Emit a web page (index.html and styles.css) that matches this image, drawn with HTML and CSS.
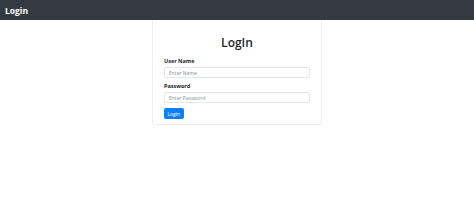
FILE: index.html
```html
<!DOCTYPE html>
<html lang="en">
<head>
  <meta charset="UTF-8" />
  <meta name="viewport" content="width=device-width, initial-scale=1.0" />
  <title>Login</title>
  <link rel="stylesheet" href="styles.css">
</head>
<body>
  <nav class="navbar">
    <span class="brand">Login</span>
  </nav>
  <div class="page">
    <form class="card">
      <h2>LogIn</h2>
      <div class="field">
        <label for="name">User Name</label>
        <input type="text" id="name" placeholder="Enter Name" />
      </div>
      <div class="field">
        <label for="pass">Password</label>
        <input type="password" id="pass" placeholder="Enter Password" />
      </div>
      <button type="button" class="btn">Login</button>
    </form>
  </div>
</body>
</html>
```

FILE: styles.css
```css
body {
  margin: 0;
  font-family: "Open Sans", "Noto Sans", Arial, sans-serif;
  background-color: #fff;
  color: #212529;
}
.navbar {
  height: 20px;
  background-color: #343a40;
  display: flex;
  align-items: center;
  padding: 0 5px;
}
.brand {
  color: #fff;
  font-size: 8.5px;
  font-weight: 700;
}
.page {
  display: flex;
  justify-content: center;
}
.card {
  box-sizing: border-box;
  width: 170px;
  padding: 16px 11px 5px 11px;
  border: 1px solid #eceef0;
  border-top: none;
  border-radius: 0 0 3px 3px;
}
.card h2 {
  margin: 0 0 8px;
  text-align: center;
  font-size: 12px;
  font-weight: 600;
  line-height: 14px;
}
.field {
  margin-bottom: 5px;
}
.field label {
  display: block;
  font-size: 5.5px;
  font-weight: 700;
  line-height: 7px;
  margin-bottom: 2px;
}
.field input {
  display: block;
  box-sizing: border-box;
  width: 100%;
  height: 11px;
  padding: 0 4px;
  border: 1px solid #e3e6e9;
  border-radius: 2px;
  font-family: inherit;
  font-size: 5px;
  color: #495057;
  outline: none;
}
.field input::placeholder {
  color: #8a9096;
}
.btn {
  display: block;
  height: 11px;
  width: 19.5px;
  padding: 0;
  border: none;
  border-radius: 2px;
  background-color: #0d7ff6;
  color: #fff;
  font-family: inherit;
  font-size: 5px;
}
```
